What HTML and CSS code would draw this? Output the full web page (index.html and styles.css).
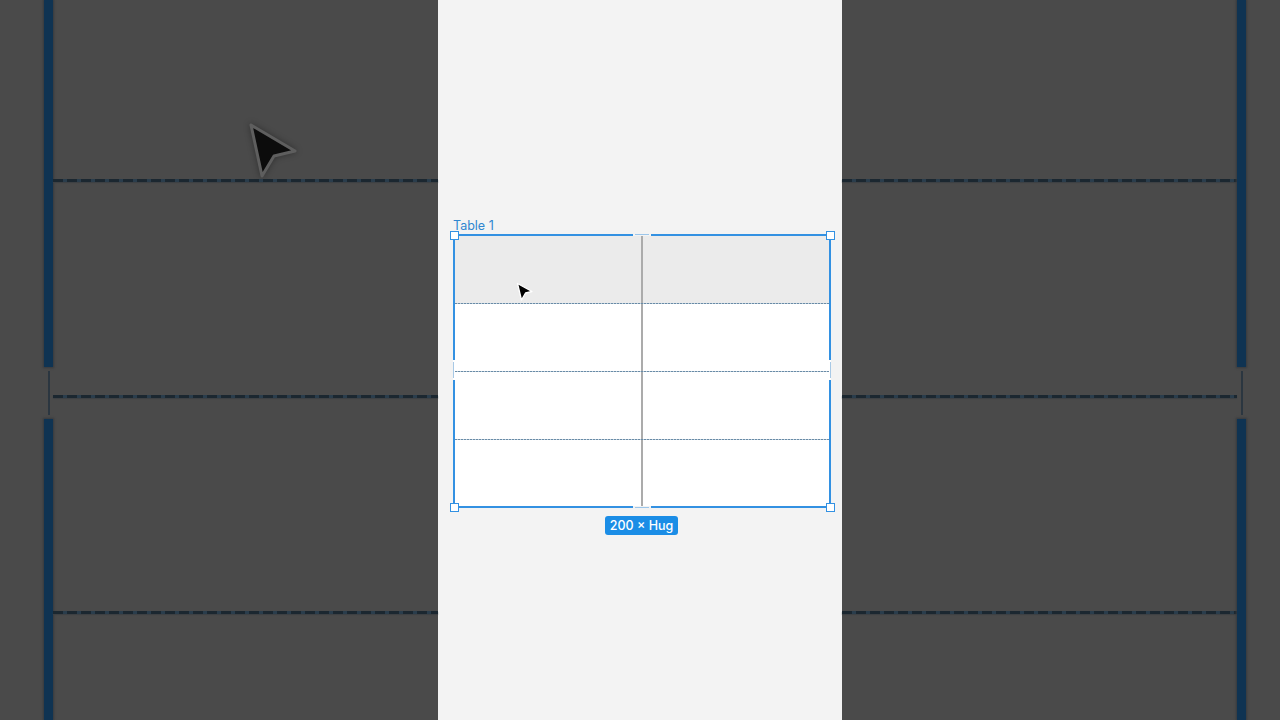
FILE: index.html
```html
<!DOCTYPE html>
<html>
<head>
<meta charset="utf-8">
<link rel="stylesheet" href="styles.css">
</head>
<body>
  <div class="side side-left">
    <div class="vline">
      <div class="vseg vseg-top"></div>
      <div class="vgap"><div class="vmark"></div></div>
      <div class="vseg vseg-bottom"></div>
    </div>
    <div class="zrows">
      <div class="zrow zrow-first"></div>
      <div class="zdash"></div>
      <div class="zrow"></div>
      <div class="zdash"></div>
      <div class="zrow"></div>
      <div class="zdash"></div>
      <div class="zrow zrow-last"></div>
    </div>
    <svg class="big-cursor" width="60" height="64" viewBox="0 0 60 64">
      <path d="M5 5 L49 31 L28 36 L16 56 Z" fill="#0c0c0c" stroke="#5e5e5e" stroke-width="3" stroke-linejoin="round"/>
    </svg>
  </div>

  <div class="center">
    <div class="frame-label">Table 1</div>
    <div class="frame">
      <div class="trow trow-head">
        <div class="cell"></div><div class="coldiv"></div><div class="cell"></div>
      </div>
      <div class="tdash"></div>
      <div class="trow">
        <div class="cell"></div><div class="coldiv"></div><div class="cell"></div>
      </div>
      <div class="tdash"></div>
      <div class="trow">
        <div class="cell"></div><div class="coldiv"></div><div class="cell"></div>
      </div>
      <div class="tdash"></div>
      <div class="trow trow-last">
        <div class="cell"></div><div class="coldiv"></div><div class="cell"></div>
      </div>

      <div class="edge edge-top"></div>
      <div class="edge edge-bottom"></div>
      <div class="edge edge-left"></div>
      <div class="edge edge-right"></div>

      <div class="handle h-tl"></div>
      <div class="handle h-tr"></div>
      <div class="handle h-bl"></div>
      <div class="handle h-br"></div>

      <svg class="cursor" width="20" height="22" viewBox="0 0 20 22">
        <path d="M1.5 1.5 L16 9.5 L9.5 11 L5.5 18 Z" fill="#000" stroke="#fff" stroke-width="1.3" stroke-linejoin="round"/>
      </svg>
    </div>
    <div class="badge-row">
      <div class="badge">200 × Hug</div>
    </div>
  </div>

  <div class="side side-right">
    <div class="zrows">
      <div class="zrow zrow-first"></div>
      <div class="zdash"></div>
      <div class="zrow"></div>
      <div class="zdash"></div>
      <div class="zrow"></div>
      <div class="zdash"></div>
      <div class="zrow zrow-last"></div>
    </div>
    <div class="vline">
      <div class="vseg vseg-top"></div>
      <div class="vgap"><div class="vmark"></div></div>
      <div class="vseg vseg-bottom"></div>
    </div>
    <div class="right-tail"></div>
  </div>
</body>
</html>
```

FILE: styles.css
```css
* { box-sizing: border-box; }

html, body {
  margin: 0;
  padding: 0;
}

body {
  width: 1280px;
  height: 720px;
  overflow: hidden;
  display: flex;
  font-family: Inter, "Noto Sans", sans-serif;
  background: #4a4a4a;
}

/* ---------- blurred side canvases ---------- */
.side {
  width: 438px;
  height: 720px;
  background: #4a4a4a;
  display: flex;
  position: relative;
  filter: blur(0.7px);
}

.side-left { padding-left: 44px; }

.vline {
  width: 9px;
  display: flex;
  flex-direction: column;
}

.vseg {
  background: #0f3352;
  box-shadow: 0 0 2px 1px #363a3e;
}
.vseg-top { height: 367px; }
.vseg-bottom { flex: 1; }

.vgap {
  height: 52px;
  display: flex;
  justify-content: center;
  padding: 4px 0;
}
.vmark {
  width: 2px;
  background: #2b3640;
}

.zrows {
  flex: 1;
  display: flex;
  flex-direction: column;
}
.side-right .zrows { flex: none; width: 395px; }
.right-tail { flex: 1; }

.zrow { height: 212px; }
.zrow-first { height: 179px; }
.zrow-last { flex: 1; }

.zdash {
  height: 3px;
  margin-bottom: 1px;
  background:
    repeating-linear-gradient(90deg, #1b2730 0 10px, #2a3d4c 10px 14px);
  box-shadow: 0 1px 1px #3e4144;
}

.big-cursor {
  position: absolute;
  left: 246px;
  top: 120px;
  filter: drop-shadow(0 0 3px rgba(0,0,0,0.35));
}

/* ---------- center canvas ---------- */
.center {
  width: 404px;
  height: 720px;
  background: #f3f3f3;
  padding: 218px 0 0 15px;
  display: flex;
  flex-direction: column;
}

.frame-label {
  font-size: 12.5px;
  line-height: 15px;
  color: #2f86d0;
  height: 16px;
}

.frame {
  position: relative;
  width: 378px;
  border: 2px solid #3391e2;
  display: flex;
  flex-direction: column;
  background: #fff;
}

.trow {
  height: 67px;
  display: flex;
}
.trow-head { background: #ebebeb; }
.trow-last { height: 66px; }

.cell { flex: 1; }

.coldiv {
  width: 2px;
  background: #ababab;
}

.tdash {
  height: 1px;
  background:
    repeating-linear-gradient(90deg, #6a8ba6 0 2px, #bccfdd 2px 3px);
}

/* edge handle gaps */
.edge {
  position: absolute;
  background: #f3f3f3;
}
.edge::after {
  content: "";
  position: absolute;
  background: #9cc6ea;
}
.edge-top, .edge-bottom {
  left: 178px;
  width: 18px;
  height: 2px;
}
.edge-top { top: -2px; }
.edge-bottom { bottom: -2px; }
.edge-top::after, .edge-bottom::after {
  left: 2px; right: 2px; top: 0; height: 1px;
}
.edge-bottom::after { top: 1px; }

.edge-left, .edge-right {
  top: 124px;
  width: 2px;
  height: 20px;
  background: #fff;
}
.edge-left { left: -2px; }
.edge-right { right: -2px; }
.edge-left::after, .edge-right::after {
  top: 2px; bottom: 2px; width: 1px; left: 0;
  background: #a8c9e6;
}
.edge-right::after { left: 1px; }

.handle {
  position: absolute;
  width: 9px;
  height: 9px;
  background: #fff;
  border: 1px solid #3391e2;
}
.h-tl { left: -5px; top: -5px; }
.h-tr { right: -6px; top: -5px; }
.h-bl { left: -5px; bottom: -6px; }
.h-br { right: -6px; bottom: -6px; }

.cursor {
  position: absolute;
  left: 61px;
  top: 46px;
}

.badge-row {
  width: 378px;
  display: flex;
  justify-content: center;
  padding-top: 8px;
}

.badge {
  background: #1b8de6;
  color: #fff;
  font-size: 12.5px;
  font-weight: 500;
  line-height: 19px;
  height: 19px;
  padding: 0 5px;
  border-radius: 3px;
  margin-left: -1px;
}
```
